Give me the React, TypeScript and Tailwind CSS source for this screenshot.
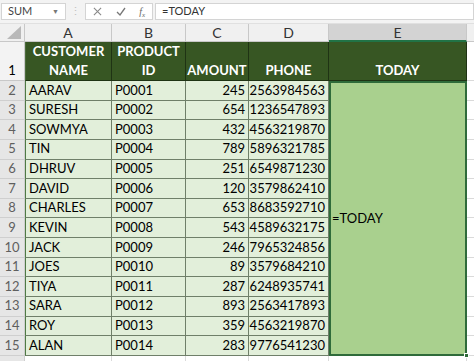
import React from 'react'

const rows: [string, string, number, string][] = [
  ['AARAV', 'P0001', 245, '2563984563'],
  ['SURESH', 'P0002', 654, '1236547893'],
  ['SOWMYA', 'P0003', 432, '4563219870'],
  ['TIN', 'P0004', 789, '5896321785'],
  ['DHRUV', 'P0005', 251, '6549871230'],
  ['DAVID', 'P0006', 120, '3579862410'],
  ['CHARLES', 'P0007', 653, '8683592710'],
  ['KEVIN', 'P0008', 543, '4589632175'],
  ['JACK', 'P0009', 246, '7965324856'],
  ['JOES', 'P0010', 89, '3579684210'],
  ['TIYA', 'P0011', 287, '6248935741'],
  ['SARA', 'P0012', 893, '2563417893'],
  ['ROY', 'P0013', 359, '4563219870'],
  ['ALAN', 'P0014', 283, '9776541230'],
]

const colHead = 'flex items-center justify-center bg-[#f0f0f0] border-r border-b border-[#c8c8c8] text-[14px] text-[#333]'
const head = 'flex items-end justify-center text-center bg-[#375623] border-r border-b border-[#1f3314] text-white font-bold text-[13px] leading-[19px]'
const cell = 'flex items-center bg-[#e2efda] border-r border-b border-[#6f7f69] text-[13px] text-black px-[3px] whitespace-nowrap overflow-hidden'

const App = () => {
  return (
    <div className="w-[474px] h-[361px] overflow-hidden bg-white" style={{ fontFamily: 'Lato, "Open Sans", sans-serif' }}>
      <div className="h-[24px] bg-[#f3f3f3] flex items-start pt-[3px] border-b border-[#e0e0e0]">
        <div className="h-[17px] w-[65px] ml-[1px] bg-white border border-[#d4d4d4] flex items-center justify-between px-[6px] text-[11px] text-[#444]">
          <span>SUM</span>
          <span className="text-[7px] text-[#777]">▼</span>
        </div>
        <div className="w-[19px] h-[17px] flex items-center justify-center text-[#c0c0c0] text-[11px]">⋮</div>
        <div className="h-[17px] w-[68px] bg-white border border-[#d4d4d4] flex items-center justify-around text-[#777] text-[11px]">
          <svg width="9" height="9" viewBox="0 0 10 10"><path d="M1 1L9 9M9 1L1 9" stroke="#888" strokeWidth="1.2" /></svg>
          <svg width="10" height="9" viewBox="0 0 10 9"><path d="M1 5L4 8L9 1" stroke="#777" strokeWidth="1.3" fill="none" /></svg>
          <span className="italic text-[10px] text-[#666]" style={{ fontFamily: '"Liberation Serif", serif' }}>f<sub className="text-[7px]">x</sub></span>
        </div>
        <div className="h-[17px] flex-1 ml-[2px] bg-white border border-[#d4d4d4] flex items-center pl-[6px] text-[11px] text-[#333]">=TODAY</div>
      </div>
      <div className="grid grid-cols-[25px_87px_74px_63px_80px_138px_1fr] grid-rows-[18px_39px_repeat(14,19.64px)_1fr] h-[337px]">
        <div className="bg-[#f0f0f0] border-r border-b border-[#c8c8c8] flex items-end justify-end pr-[3px] pb-[2px]">
          <svg width="14" height="13" viewBox="0 0 14 13"><path d="M14 0L14 13L0 13Z" fill="#b9b9b9" /></svg>
        </div>
        <div className={colHead}>A</div>
        <div className={colHead}>B</div>
        <div className={colHead}>C</div>
        <div className={colHead}>D</div>
        <div className="flex items-center justify-center bg-[#d3d3d3] border-r border-[#c8c8c8] border-b-2 border-b-[#217346] text-[14px] text-[#333]">E</div>
        <div className="bg-[#f0f0f0] border-b border-[#c8c8c8]"></div>

        <div className="flex items-end justify-center bg-[#f3f3f3] border-r border-b border-[#c8c8c8] text-[13px] text-black leading-[19px]">1</div>
        <div className={head + ' border-l border-l-[#4a6b3a]'}>CUSTOMER<br />NAME</div>
        <div className={head}>PRODUCT<br />ID</div>
        <div className={head}>AMOUNT</div>
        <div className={head}>PHONE</div>
        <div className={head}>TODAY</div>
        <div className="border-b border-[#dadada]"></div>

        {rows.map((r, i) => (
          <React.Fragment key={r[1]}>
            <div className="flex items-center justify-center bg-[#e6e6e6] border-r border-b border-[#cfcfcf] text-[13px] text-[#5f5f5f]">{i + 2}</div>
            <div className={cell + ' border-l border-l-[#4f7a45]'}>{r[0]}</div>
            <div className={cell}>{r[1]}</div>
            <div className={cell + ' justify-end'}>{r[2]}</div>
            <div className={cell + ' justify-end px-[1px]'}>{r[3]}</div>
            {i === 0 && (
              <div className="row-span-14 relative flex items-center bg-[#a9d08e] border-2 border-[#2f6b3a] text-[13px] text-black pl-[1px]">
                =TODAY
                <div className="absolute -right-[4px] -bottom-[4px] w-[5px] h-[5px] bg-[#2f6b3a] border border-white"></div>
              </div>
            )}
            <div className="border-b border-[#dadada]"></div>
          </React.Fragment>
        ))}

        <div className="bg-[#e6e6e6] border-r border-[#cfcfcf]"></div>
        <div className="border-r border-[#dadada]"></div>
        <div className="border-r border-[#dadada]"></div>
        <div className="border-r border-[#dadada]"></div>
        <div className="border-r border-[#dadada]"></div>
        <div className="border-r border-[#dadada]"></div>
        <div></div>
      </div>
    </div>
  )
}

export default App
